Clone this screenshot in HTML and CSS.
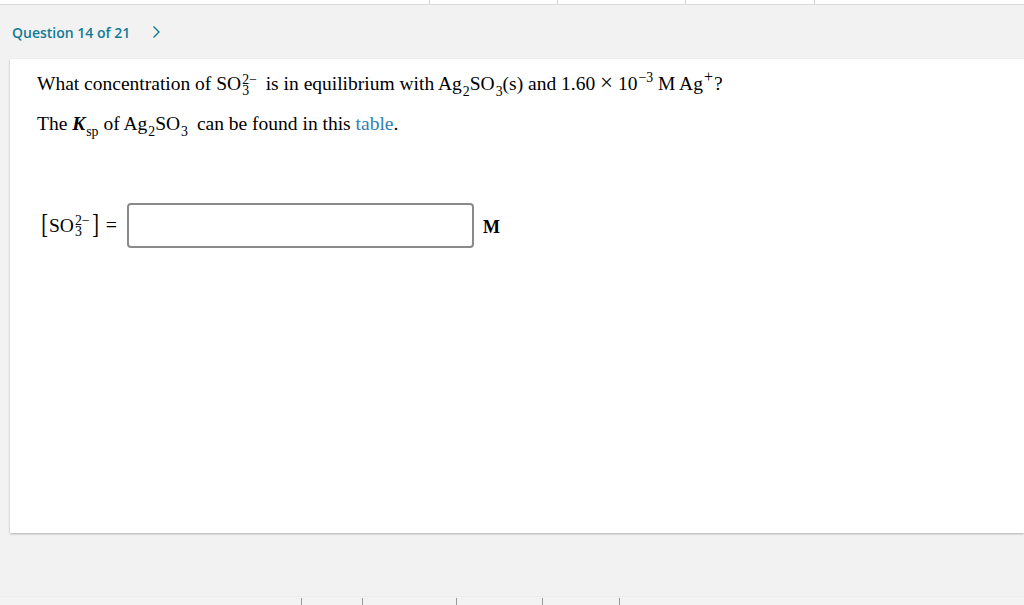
FILE: index.html
```html
<!DOCTYPE html>
<html>
<head>
<meta charset="utf-8">
<link rel="stylesheet" href="styles.css">
</head>
<body>
<div class="topbar">
  <div class="tb tb1"></div>
  <div class="tb tb2"></div>
  <div class="tb tb3"></div>
  <div class="tb tb4"></div>
  <div class="tb tb5"></div>
</div>
<div class="nav">
  <span class="qnum">Question 14 of 21</span>
  <svg class="chev" width="9" height="14" viewBox="0 0 9 14"><path d="M1.5 1.5 L7 7 L1.5 12.5" fill="none" stroke="#137b95" stroke-width="1.4"/></svg>
</div>
<div class="card">
  <p class="q1">What concentration of SO<span class="ss"><span class="up">2−</span><span class="dn">3</span></span> is in equilibrium with Ag<sub class="s">2</sub>SO<sub class="s">3</sub>(s) and 1.60 <span class="times">×</span> 10<sup class="p">−3</sup> M Ag<sup class="p pl">+</sup>?</p>
  <p class="q2">The <i class="k">K</i><sub class="s">sp</sub> of Ag<sub class="s">2</sub>SO<sub class="s s3">3</sub> can be found in this <span class="link">table</span>.</p>
  <div class="answer">
    <span class="lbl"><span class="br">[</span>SO<span class="ss"><span class="up">2−</span><span class="dn">3</span></span><span class="br">]</span></span>
    <span class="eq">=</span>
    <div class="input"></div>
    <span class="unit">M</span>
  </div>
</div>
<div class="bottom">
  <div class="ticks">
    <span class="tick t1"></span><span class="tick t2"></span><span class="tick t3"></span><span class="tick t4"></span><span class="tick t5"></span>
  </div>
</div>
</body>
</html>
```

FILE: styles.css
```css
html, body {
  margin: 0;
  padding: 0;
}
body {
  width: 1024px;
  height: 605px;
  background: #f2f2f2;
  overflow: hidden;
  position: relative;
  font-family: "Liberation Serif", "Times New Roman", serif;
}
.topbar {
  height: 4px;
  background: #fff;
  border-bottom: 1px solid #dcdcdc;
  display: grid;
  grid-template-columns: 430px 128px 128px 129px 1fr;
}
.tb { border-right: 1px solid #d4d4d4; }
.tb5 { border-right: none; }
.nav {
  display: flex;
  align-items: center;
  height: 54px;
  padding-left: 12px;
}
.qnum {
  font-family: "Source Sans Pro", "Open Sans", sans-serif;
  font-weight: 600;
  font-size: 14px;
  color: #137b95;
  letter-spacing: 0;
}
.chev { margin-left: 22px; }
.card {
  margin-left: 10px;
  height: 474px;
  background: #fff;
  box-shadow: 0 1px 2px rgba(0,0,0,0.28);
  padding: 13px 0 0 27px;
  box-sizing: border-box;
  color: #000;
  font-size: 19.5px;
}
p { margin: 0; }
.q1 { line-height: 24px; }
.q2 { line-height: 24px; margin-top: 16px; }
sub, sup { font-size: 13.8px; line-height: 0; }
sub.s { position: relative; vertical-align: baseline; top: 6px; margin-left: 1px; }
sub.s3 { margin-right: 4px; }
sup.p { position: relative; vertical-align: baseline; top: -8px; margin-left: 1px; }
sup.pl { font-size: 16px; margin-right: 1px; }
.times { font-size: 23px; line-height: 0; }
.ss {
  display: inline-block;
  vertical-align: -5px;
  margin-left: 1px;
  margin-right: 4px;
}
.ss .up, .ss .dn {
  display: block;
  font-size: 13.8px;
  line-height: 11px;
}
.k { font-weight: bold; }
.link { color: #2f7fb5; }
.answer {
  display: flex;
  align-items: center;
  margin-top: 67px;
  margin-left: 3px;
}
.lbl { display: inline-flex; align-items: center; }
.lbl .ss { margin-right: 1px; vertical-align: baseline; }
.br { font-size: 27px; font-weight: 300; transform: scaleX(0.75); display: inline-block; line-height: 1; margin-top: -3px; }
.eq { font-size: 20px; margin-left: 6px; }
.input {
  width: 343px;
  height: 41px;
  border: 2px solid #8a8a8a;
  border-radius: 4px;
  margin-left: 10px;
}
.unit { margin-left: 9px; font-size: 18px; font-weight: bold; display: inline-block; margin-top: 4px; }
.bottom {
  position: absolute;
  left: 0; right: 0; bottom: 0;
  height: 8px;
  background: #f3f3f3;
  border-top: 1px solid #ededed;
}
.ticks { position: relative; height: 8px; }
.tick { position: absolute; top: 1px; width: 1px; height: 7px; background: #999; }
.t1 { left: 301px; } .t2 { left: 362px; } .t3 { left: 456px; } .t4 { left: 542px; } .t5 { left: 619px; }
```
